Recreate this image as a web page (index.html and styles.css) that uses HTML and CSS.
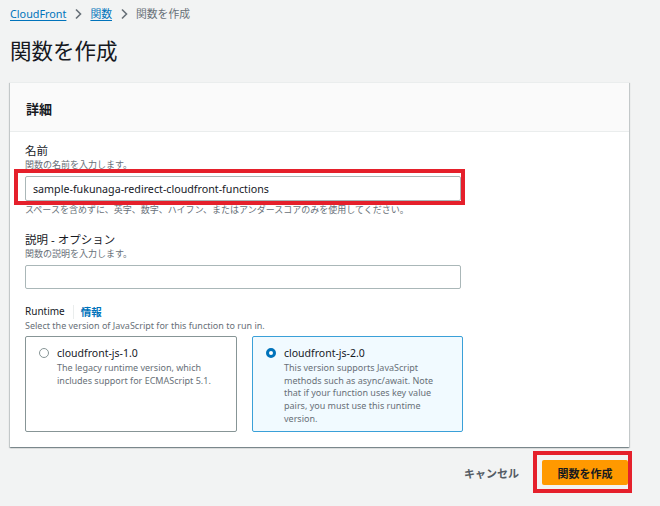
FILE: index.html
```html
<!DOCTYPE html>
<html lang="ja">
<head>
    <meta charset="UTF-8">
    <meta name="viewport" content="width=device-width, initial-scale=1.0">
    <title>関数を作成 | CloudFront</title>
    <link rel="stylesheet" href="styles.css">
</head>
<body>
    <div class="page">
        <nav class="breadcrumbs">
            <a href="#">CloudFront</a>
            <svg class="chevron" viewBox="0 0 8 12" width="8" height="12"><path d="M2 1.5 6.5 6 2 10.5"/></svg>
            <a href="#">関数</a>
            <svg class="chevron" viewBox="0 0 8 12" width="8" height="12"><path d="M2 1.5 6.5 6 2 10.5"/></svg>
            <span class="current">関数を作成</span>
        </nav>

        <h1>関数を作成</h1>

        <div class="card">
            <div class="card-header">
                <h2>詳細</h2>
            </div>
            <div class="card-body">
                <div class="field">
                    <label for="fnName">名前</label>
                    <div class="hint">関数の名前を入力します。</div>
                    <div class="input-wrap">
                        <input type="text" id="fnName" value="sample-fukunaga-redirect-cloudfront-functions">
                        <div class="mark mark-input"></div>
                    </div>
                    <div class="hint constraint">スペースを含めずに、英字、数字、ハイフン、またはアンダースコアのみを使用してください。</div>
                </div>

                <div class="field">
                    <label for="fnDesc">説明 - オプション</label>
                    <div class="hint">関数の説明を入力します。</div>
                    <div class="input-wrap">
                        <input type="text" id="fnDesc" class="short">
                    </div>
                </div>

                <div class="field">
                    <div class="label-row">
                        <span class="label">Runtime</span>
                        <a href="#" class="info">情報</a>
                    </div>
                    <div class="hint">Select the version of JavaScript for this function to run in.</div>
                    <div class="tiles">
                        <div class="tile">
                            <span class="radio"></span>
                            <div class="tile-text">
                                <div class="tile-title">cloudfront-js-1.0</div>
                                <div class="tile-desc">The legacy runtime version, which includes support for ECMAScript 5.1.</div>
                            </div>
                        </div>
                        <div class="tile selected">
                            <span class="radio"></span>
                            <div class="tile-text">
                                <div class="tile-title">cloudfront-js-2.0</div>
                                <div class="tile-desc">This version supports JavaScript methods such as async/await. Note that if your function uses key value pairs, you must use this runtime version.</div>
                            </div>
                        </div>
                    </div>
                </div>
            </div>
        </div>

        <div class="actions">
            <button class="btn-link">キャンセル</button>
            <div class="primary-wrap">
                <button class="btn-primary">関数を作成</button>
                <div class="mark mark-button"></div>
            </div>
        </div>
    </div>
</body>
</html>
```

FILE: styles.css
```css
:root {
    --bg-color: #f2f3f3;
    --text-color: #16191f;
    --muted-color: #687078;
    --link-color: #0073bb;
    --border-color: #aab7b8;
    --divider-color: #eaeded;
    --mark-color: #e5202b;
}

html, body {
    height: 100%;
}

body {
    margin: 0;
    background: var(--bg-color);
    font-family: "Noto Sans", "Noto Sans CJK JP", sans-serif;
    color: var(--text-color);
    overflow: hidden;
}

.page {
    width: 619px;
    padding-left: 10px;
}

.breadcrumbs {
    display: flex;
    align-items: center;
    gap: 8px;
    height: 16px;
    padding-top: 6px;
    font-size: 10.8px;
    line-height: 16px;
}

.breadcrumbs a {
    color: var(--link-color);
    text-decoration: underline;
    text-underline-offset: 2px;
}

.breadcrumbs .current {
    color: var(--muted-color);
}

.chevron path {
    fill: none;
    stroke: var(--muted-color);
    stroke-width: 1.6;
}

h1 {
    margin: 14px 0 0;
    font-size: 21.5px;
    line-height: 30px;
    font-weight: 400;
}

.card {
    margin-top: 16px;
    background: white;
    border-top: 1px solid var(--divider-color);
    box-shadow: 0 1px 1px 0 rgba(0, 28, 36, 0.3), 1px 1px 1px 0 rgba(0, 28, 36, 0.15), -1px 1px 1px 0 rgba(0, 28, 36, 0.15);
}

.card-header {
    display: flex;
    align-items: center;
    height: 48px;
    padding: 0 16px;
    background: #fafafa;
    border-bottom: 1px solid var(--divider-color);
}

.card-header h2 {
    margin: 2px 0 0;
    font-size: 13px;
    font-weight: 700;
}

.card-body {
    padding: 11px 15px 15px;
}

.field + .field {
    margin-top: 15px;
}

.field label,
.label-row .label {
    display: block;
    font-size: 11.5px;
    line-height: 15px;
}

.label-row {
    display: flex;
    align-items: center;
}

.label-row .label {
    font-size: 10px;
}

.info {
    margin-left: 8px;
    padding-left: 7px;
    border-left: 1px solid var(--divider-color);
    color: var(--link-color);
    font-size: 10.5px;
    line-height: 14px;
    font-weight: 700;
    text-decoration: none;
}

.hint {
    font-size: 9px;
    line-height: 14px;
    color: var(--muted-color);
}

.constraint {
    margin-top: 2px;
}

.input-wrap {
    position: relative;
    width: 436px;
    margin-top: 4px;
}

input[type="text"] {
    box-sizing: border-box;
    display: block;
    width: 100%;
    height: 25px;
    padding: 0 7px;
    border: 1px solid var(--border-color);
    border-radius: 2px;
    font-family: inherit;
    font-size: 10.7px;
    color: var(--text-color);
    background: white;
}

input.short {
    height: 24px;
}

.mark {
    position: absolute;
    border: 4px solid var(--mark-color);
    pointer-events: none;
}

.mark-input {
    left: -11px;
    top: -7px;
    right: -4px;
    bottom: -4px;
}

.tiles {
    display: grid;
    grid-template-columns: 212px 211px;
    gap: 15px;
    margin-top: 3px;
}

.tile {
    box-sizing: border-box;
    display: flex;
    align-items: flex-start;
    gap: 8px;
    height: 96px;
    padding: 10px 14px 0 13px;
    border: 1px solid #879596;
    border-radius: 2px;
}

.tile.selected {
    background: #f1faff;
    border-color: #3aa0d8;
}

.radio {
    box-sizing: border-box;
    flex: none;
    width: 10px;
    height: 10px;
    margin-top: 1px;
    border: 1px solid #879596;
    border-radius: 50%;
    background: white;
}

.tile.selected .radio {
    border: 3px solid var(--link-color);
}

.tile-title {
    font-size: 10.5px;
    line-height: 12px;
}

.tile-desc {
    margin-top: 3px;
    font-size: 9px;
    line-height: 12.7px;
    color: var(--muted-color);
}

.actions {
    display: flex;
    justify-content: flex-end;
    align-items: center;
    gap: 23px;
    margin-top: 13px;
    padding-right: 1px;
}

button {
    font-family: inherit;
    font-size: 11px;
    font-weight: 700;
    cursor: pointer;
}

.btn-link {
    padding: 0;
    border: none;
    background: none;
    color: #545b64;
}

.primary-wrap {
    position: relative;
    height: 25px;
}

.btn-primary {
    display: block;
    width: 86px;
    height: 25px;
    padding: 0;
    border: none;
    border-radius: 2px;
    background: #ff9900;
    color: var(--text-color);
}

.mark-button {
    left: -9px;
    top: -9px;
    right: -4px;
    bottom: -8px;
}
```
